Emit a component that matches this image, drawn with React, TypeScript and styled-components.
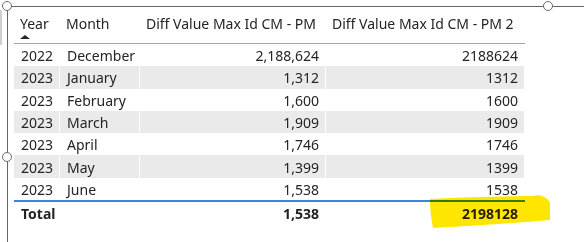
import React from 'react'
import styled, { createGlobalStyle } from 'styled-components'

const GlobalStyle = createGlobalStyle`
  html, body {
    margin: 0;
    padding: 0;
    background: #fff;
  }
  body {
    font-family: 'Noto Sans', 'Liberation Sans', sans-serif;
    color: #252423;
  }
`

const COLUMNS = '46px 80px 186px 199px'

const Page = styled.div`
  position: relative;
  width: 584px;
  height: 242px;
  overflow: hidden;
`

const Frame = styled.div`
  margin: 6px 0 0 7px;
  height: 236px;
  border-top: 1px solid #666;
  border-left: 1px solid #666;
  padding-left: 6px;
  box-sizing: border-box;
`

const Table = styled.div`
  width: 511px;
  font-size: 14px;
`

const Row = styled.div<{ $alt?: boolean }>`
  display: grid;
  grid-template-columns: ${COLUMNS};
  height: 22.3px;
  background: ${(p) => (p.$alt ? '#eaeaea' : '#fff')};
`

const HeaderRow = styled.div`
  display: grid;
  grid-template-columns: ${COLUMNS};
  height: 36px;
  border-bottom: 1px solid #77afe6;
`

const HeaderCell = styled.div`
  position: relative;
  padding: 7px 0 0 6px;
  line-height: 20px;
  white-space: nowrap;
  border-right: 1px solid #fff;
`

const SortArrow = styled.span`
  position: absolute;
  left: 6px;
  top: 28px;
  width: 0;
  height: 0;
  border-left: 5px solid transparent;
  border-right: 5px solid transparent;
  border-bottom: 4px solid #252423;
`

const Cell = styled.div<{ $align?: 'left' | 'right' }>`
  display: flex;
  align-items: center;
  justify-content: ${(p) => (p.$align === 'right' ? 'flex-end' : 'flex-start')};
  padding: 1px 6px 0 7px;
  white-space: nowrap;
  border-right: 1px solid #fff;
`

const TotalRow = styled.div`
  display: grid;
  grid-template-columns: ${COLUMNS};
  height: 22px;
  border-top: 2px solid #3a86dc;
  font-weight: 700;
`

const Handle = styled.span<{ $x: number; $y: number }>`
  position: absolute;
  left: ${(p) => p.$x - 5}px;
  top: ${(p) => p.$y - 5}px;
  width: 8px;
  height: 8px;
  border: 1.5px solid #6b6b6b;
  border-radius: 50%;
  background: #fff;
`

const EdgeMark = styled.span`
  position: absolute;
  left: 0;
  top: 10px;
  width: 2px;
  height: 35px;
  background: #cfcfcf;
`

const Highlight = styled.svg`
  position: absolute;
  left: 428px;
  top: 193px;
  mix-blend-mode: multiply;
  pointer-events: none;
`

const rows = [
  ['2022', 'December', '2,188,624', '2188624'],
  ['2023', 'January', '1,312', '1312'],
  ['2023', 'February', '1,600', '1600'],
  ['2023', 'March', '1,909', '1909'],
  ['2023', 'April', '1,746', '1746'],
  ['2023', 'May', '1,399', '1399'],
  ['2023', 'June', '1,538', '1538'],
]

const App = () => {
  return (
    <Page>
      <GlobalStyle />
      <EdgeMark />
      <Frame>
        <Table>
          <HeaderRow>
            <HeaderCell>
              Year
              <SortArrow />
            </HeaderCell>
            <HeaderCell>Month</HeaderCell>
            <HeaderCell>Diff Value Max Id CM - PM</HeaderCell>
            <HeaderCell>Diff Value Max Id CM - PM 2</HeaderCell>
          </HeaderRow>
          {rows.map((r, i) => (
            <Row key={i} $alt={i % 2 === 1}>
              <Cell $align="right">{r[0]}</Cell>
              <Cell>{r[1]}</Cell>
              <Cell $align="right">{r[2]}</Cell>
              <Cell $align="right">{r[3]}</Cell>
            </Row>
          ))}
          <TotalRow>
            <Cell>Total</Cell>
            <Cell />
            <Cell $align="right">1,538</Cell>
            <Cell $align="right">2198128</Cell>
          </TotalRow>
        </Table>
      </Frame>
      <Handle $x={7} $y={6} />
      <Handle $x={548} $y={6} />
      <Handle $x={7} $y={157} />
      <Highlight width="126" height="38" viewBox="0 0 126 38">
        <path
          d="M2 6 C40 4 90 3 105 3 L110 2 C116 3 121 6 122 10 L122 27 C100 29 60 32 5 35 C3 25 2 15 2 6 Z"
          fill="#ffe600"
        />
      </Highlight>
    </Page>
  )
}

export default App
